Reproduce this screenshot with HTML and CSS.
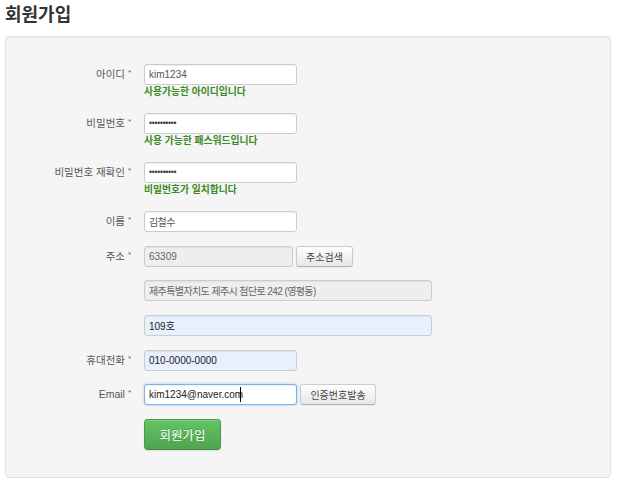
FILE: index.html
```html
<!DOCTYPE html>
<html lang="ko">
<head>
<meta charset="utf-8">
<title>회원가입</title>
<link rel="stylesheet" href="styles.css">
</head>
<body>
<h1 class="title">회원가입</h1>
<form class="well">
  <div class="row">
    <label class="lbl">아이디 <sup>*</sup></label>
    <div class="ctl">
      <input class="inp" type="text" value="kim1234">
      <p class="help">사용가능한 아이디입니다</p>
    </div>
  </div>
  <div class="row">
    <label class="lbl">비밀번호 <sup>*</sup></label>
    <div class="ctl">
      <input class="inp pw" type="password" value="abcdefghij">
      <p class="help">사용 가능한 패스워드입니다</p>
    </div>
  </div>
  <div class="row">
    <label class="lbl">비밀번호 재확인 <sup>*</sup></label>
    <div class="ctl">
      <input class="inp pw" type="password" value="abcdefghij">
      <p class="help">비밀번호가 일치합니다</p>
    </div>
  </div>
  <div class="row">
    <label class="lbl">이름 <sup>*</sup></label>
    <div class="ctl"><input class="inp ko" type="text" value="김철수"></div>
  </div>
  <div class="row">
    <label class="lbl">주소 <sup>*</sup></label>
    <div class="ctl inline">
      <input class="inp ro zip" type="text" value="63309" readonly>
      <button type="button" class="btn btn-addr">주소검색</button>
    </div>
  </div>
  <div class="row">
    <span class="lbl"></span>
    <div class="ctl"><input class="inp ro wide ko" type="text" value="제주특별자치도 제주시 첨단로 242 (영평동)" readonly></div>
  </div>
  <div class="row">
    <span class="lbl"></span>
    <div class="ctl"><input class="inp auto wide dark" type="text" value="109호"></div>
  </div>
  <div class="row">
    <label class="lbl">휴대전화 <sup>*</sup></label>
    <div class="ctl"><input class="inp auto dark" type="text" value="010-0000-0000"></div>
  </div>
  <div class="row">
    <label class="lbl">Email <sup>*</sup></label>
    <div class="ctl inline">
      <div class="focuswrap">
        <input class="inp focus dark" type="text" value="kim1234@naver.com">
        <span class="caret"></span>
      </div>
      <button type="button" class="btn btn-mail">인증번호발송</button>
    </div>
  </div>
  <div class="row last">
    <span class="lbl"></span>
    <div class="ctl"><button type="submit" class="btn-success">회원가입</button></div>
  </div>
</form>
</body>
</html>
```

FILE: styles.css
```css
html, body {
  margin: 0;
  padding: 0;
  background: #ffffff;
}
body {
  padding: 0 6px 0 5px;
  font-family: "Liberation Sans", "Noto Sans CJK KR", sans-serif;
  font-size: 10px;
  color: #555555;
}
.title {
  margin: 0 0 6px 0;
  font-size: 18px;
  line-height: 30px;
  font-weight: bold;
  color: #333333;
}
.well {
  box-sizing: border-box;
  width: 606px;
  height: 442px;
  margin: 0;
  padding: 27px 0 26px 0;
  background: #f5f5f5;
  border: 1px solid #e3e3e3;
  border-radius: 4px;
  box-shadow: inset 0 1px 1px rgba(0, 0, 0, 0.05);
}
.row {
  display: grid;
  grid-template-columns: 125px 1fr;
  column-gap: 13px;
  margin-bottom: 13.7px;
}
.row.last {
  margin-bottom: 0;
}
.lbl {
  text-align: right;
  line-height: 21px;
  height: 21px;
  color: #555555;
  font-size: 10.5px;
  white-space: nowrap;
}
.lbl sup {
  font-size: 8px;
  vertical-align: 0;
  position: relative;
  top: -3px;
  color: #666666;
}
.ctl {
  display: flex;
  flex-direction: column;
  align-items: flex-start;
}
.ctl.inline {
  flex-direction: row;
  align-items: center;
  gap: 3px;
}
.inp {
  box-sizing: border-box;
  width: 153px;
  height: 21px;
  margin: 0;
  padding: 0 4px;
  border: 1px solid #cccccc;
  border-radius: 3px;
  background: #ffffff;
  font-family: "Liberation Sans", "Noto Sans CJK KR", sans-serif;
  font-size: 10px;
  color: #555555;
  box-shadow: inset 0 1px 1px rgba(0, 0, 0, 0.06);
  outline: none;
}
.inp.ko {
  letter-spacing: -0.6px;
}
.inp.pw {
  color: #333333;
  font-size: 8.5px;
  letter-spacing: -0.25px;
}
.inp.dark {
  color: #222222;
}
.inp.ro {
  background: #eeeeee;
  color: #666666;
}
.inp.zip {
  width: 149px;
}
.inp.wide {
  width: 288px;
}
.inp.auto {
  background: #e8f0fe;
}
.inp.focus {
  border-color: #78b4e8;
  box-shadow: inset 0 1px 1px rgba(0, 0, 0, 0.06), 0 0 3px rgba(102, 175, 233, 0.6);
}
.focuswrap {
  position: relative;
  width: 153px;
  height: 21px;
}
.caret {
  position: absolute;
  left: 96px;
  top: 3px;
  width: 1px;
  height: 15px;
  background: #000000;
}
.help {
  margin: 0;
  height: 14.3px;
  line-height: 14px;
  font-size: 9.8px;
  font-weight: bold;
  color: #3a8a26;
  white-space: nowrap;
}
.btn {
  box-sizing: border-box;
  height: 21px;
  margin: 0;
  padding: 0;
  border: 1px solid #cccccc;
  border-bottom-color: #b3b3b3;
  border-radius: 3px;
  background: linear-gradient(#ffffff, #e6e6e6);
  font-family: "Liberation Sans", "Noto Sans CJK KR", sans-serif;
  font-size: 10px;
  color: #444444;
  box-shadow: inset 0 1px 0 rgba(255, 255, 255, 0.2), 0 1px 2px rgba(0, 0, 0, 0.05);
}
.btn-addr {
  width: 57px;
}
.btn-mail {
  width: 76px;
}
.btn-success {
  box-sizing: border-box;
  width: 77px;
  height: 31px;
  margin: 0;
  padding: 0;
  border: 1px solid #4a9a4a;
  border-bottom-color: #3f8a3f;
  border-radius: 4px;
  background: linear-gradient(#62c462, #51a351);
  font-family: "Liberation Sans", "Noto Sans CJK KR", sans-serif;
  font-size: 12.5px;
  color: #ffffff;
  text-shadow: 0 -1px 0 rgba(0, 0, 0, 0.2);
  box-shadow: inset 0 1px 0 rgba(255, 255, 255, 0.2), 0 1px 2px rgba(0, 0, 0, 0.1);
}
```
